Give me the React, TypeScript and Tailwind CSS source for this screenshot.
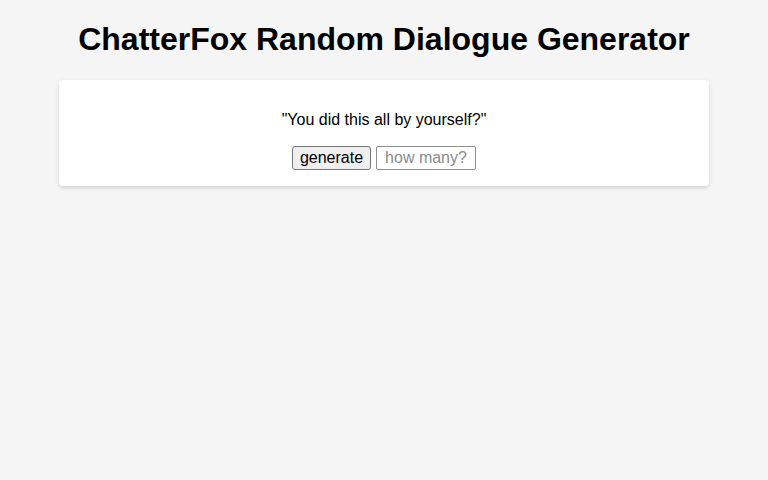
export default function App() {
  return (
    <div className="min-h-[480px] bg-[#f5f5f5] text-black" style={{ fontFamily: '"Liberation Sans", Arial, sans-serif' }}>
      <div className="pt-[21px]">
        <h1 className="text-center text-[32px] font-bold leading-[37px]">ChatterFox Random Dialogue Generator</h1>
        <div className="mx-auto mt-[22px] w-[650px] rounded-[4px] bg-white px-5 pb-[16px] pt-[31px] text-center shadow-[0_2px_4px_rgba(0,0,0,0.15)]">
          <p className="text-[16px] leading-[18px]">"You did this all by yourself?"</p>
          <div className="mt-[17px] flex justify-center gap-[5px]">
            <button className="h-[24px] rounded-[3px] border border-[#767676] bg-[#efefef] px-[7px] text-[16px] leading-[18px] text-black">generate</button>
            <input
              placeholder="how many?"
              className="h-[24px] w-[100px] rounded-[2px] border border-[#8f8f8f] bg-white px-[8px] text-[16px] leading-[18px] text-black placeholder:text-[#8a8a8a] outline-none"
            />
          </div>
        </div>
      </div>
    </div>
  );
}
